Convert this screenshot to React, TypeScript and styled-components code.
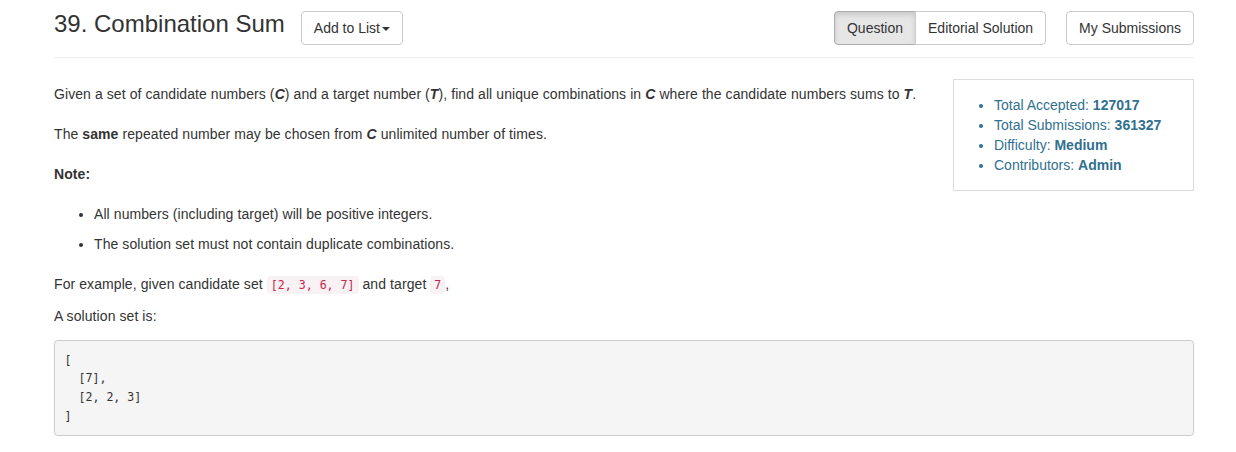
import React from "react";
import styled, { createGlobalStyle } from "styled-components";

const GlobalStyle = createGlobalStyle`
    body {
        margin: 0;
        background: #fff;
        font-family: "Liberation Sans", Arial, sans-serif;
        font-size: 14px;
        line-height: 20px;
        color: #333;
    }
`;

const Page = styled.div`
    width: 1140px;
    padding: 11px 0 0 54px;
`;

const Header = styled.header`
    display: flex;
    justify-content: space-between;
    align-items: flex-start;
`;

const TitleGroup = styled.div`
    display: flex;
    align-items: flex-start;
    gap: 16px;
`;

const Title = styled.h3`
    margin: 0;
    font-size: 24px;
    font-weight: 500;
    line-height: 26px;
    color: #333;
`;

const Actions = styled.div`
    display: flex;
    gap: 20px;
`;

const ButtonGroup = styled.div`
    display: flex;
    & > button + button {
        margin-left: -1px;
    }
    & > button:not(:first-child) {
        border-top-left-radius: 0;
        border-bottom-left-radius: 0;
    }
    & > button:not(:last-child) {
        border-top-right-radius: 0;
        border-bottom-right-radius: 0;
    }
`;

const Button = styled.button<{ $active?: boolean }>`
    height: 34px;
    padding: 6px 12px;
    font-family: inherit;
    font-size: 14px;
    line-height: 20px;
    color: #333;
    background: ${(p) => (p.$active ? "#e6e6e6" : "#fff")};
    border: 1px solid ${(p) => (p.$active ? "#adadad" : "#ccc")};
    border-radius: 4px;
    box-shadow: ${(p) => (p.$active ? "inset 0 3px 5px rgba(0, 0, 0, 0.125)" : "none")};
    cursor: pointer;
    white-space: nowrap;
`;

const Caret = styled.span`
    display: inline-block;
    width: 0;
    height: 0;
    margin-left: 2px;
    vertical-align: middle;
    border-top: 4px solid #333;
    border-right: 4px solid transparent;
    border-left: 4px solid transparent;
`;

const Rule = styled.hr`
    margin: 12px 0 0;
    border: 0;
    border-top: 1px solid #eee;
`;

const Body = styled.div`
    display: flex;
    align-items: flex-start;
    gap: 20px;
`;

const Description = styled.div`
    flex: 1;
    padding-top: 26px;
    letter-spacing: 0.08px;
`;

const Para = styled.p<{ $gap?: number }>`
    margin: 0 0 ${(p) => p.$gap ?? 20}px;
`;

const Notes = styled.ul`
    margin: 0 0 20px;
    padding-left: 40px;
    li + li {
        margin-top: 10px;
    }
`;

const Code = styled.code`
    padding: 2px 4px;
    font-family: "DejaVu Sans Mono", "Liberation Mono", monospace;
    font-size: 11.6px;
    letter-spacing: 0;
    color: #c7254e;
    background: #f9f2f4;
    border-radius: 4px;
`;

const Stats = styled.div`
    width: 239px;
    margin-top: 21px;
    border: 1px solid #ddd;
    padding: 15px 0;
`;

const StatList = styled.ul`
    margin: 0;
    padding-left: 40px;
    color: #31708f;
`;

const Pre = styled.pre`
    margin: 14px 0 0;
    padding: 9.5px;
    font-family: "DejaVu Sans Mono", "Liberation Mono", monospace;
    font-size: 11.6px;
    line-height: 18.8px;
    color: #333;
    background: #f5f5f5;
    border: 1px solid #ccc;
    border-radius: 4px;
`;

const stats = [
    ["Total Accepted", "127017"],
    ["Total Submissions", "361327"],
    ["Difficulty", "Medium"],
    ["Contributors", "Admin"],
];

export default function App() {
    return (
        <Page>
            <GlobalStyle />
            <Header>
                <TitleGroup>
                    <Title>39. Combination Sum</Title>
                    <Button>
                        Add to List<Caret />
                    </Button>
                </TitleGroup>
                <Actions>
                    <ButtonGroup>
                        <Button $active>Question</Button>
                        <Button>Editorial Solution</Button>
                    </ButtonGroup>
                    <Button>My Submissions</Button>
                </Actions>
            </Header>
            <Rule />
            <Body>
                <Description>
                    <Para>
                        Given a set of candidate numbers (<b><i>C</i></b>) and a target number (
                        <b><i>T</i></b>), find all unique combinations in <b><i>C</i></b> where the
                        candidate numbers sums to <b><i>T</i></b>.
                    </Para>
                    <Para>
                        The <b>same</b> repeated number may be chosen from <b><i>C</i></b> unlimited
                        number of times.
                    </Para>
                    <Para>
                        <b>Note:</b>
                    </Para>
                    <Notes>
                        <li>All numbers (including target) will be positive integers.</li>
                        <li>The solution set must not contain duplicate combinations.</li>
                    </Notes>
                    <Para $gap={11}>
                        For example, given candidate set <Code>[2, 3, 6, 7]</Code> and target{" "}
                        <Code>7</Code>,
                    </Para>
                    <Para $gap={0}>A solution set is:</Para>
                </Description>
                <Stats>
                    <StatList>
                        {stats.map(([label, value]) => (
                            <li key={label}>
                                {label}: <b>{value}</b>
                            </li>
                        ))}
                    </StatList>
                </Stats>
            </Body>
            <Pre>{`[
  [7],
  [2, 2, 3]
]`}</Pre>
        </Page>
    );
}
